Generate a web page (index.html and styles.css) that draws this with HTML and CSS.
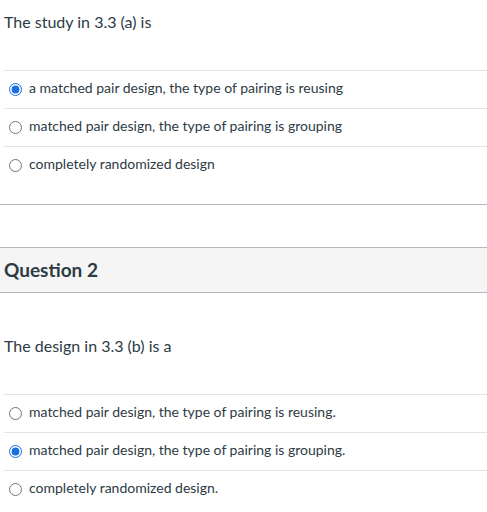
FILE: index.html
```html
<!DOCTYPE html>
<html lang="en">
<head>
    <meta charset="UTF-8">
    <title>Quiz</title>
    <link rel="stylesheet" href="styles.css">
</head>
<body>
    <div class="question">
        <div class="question-text">The study in 3.3 (a) is</div>
        <div class="answers">
            <label class="answer">
                <input type="radio" name="q1" checked>
                <span>a matched pair design, the type of pairing is reusing</span>
            </label>
            <label class="answer">
                <input type="radio" name="q1">
                <span>matched pair design, the type of pairing is grouping</span>
            </label>
            <label class="answer">
                <input type="radio" name="q1">
                <span>completely randomized design</span>
            </label>
        </div>
    </div>

    <div class="question">
        <div class="question-header">Question 2</div>
        <div class="question-text spaced">The design in 3.3 (b) is a</div>
        <div class="answers">
            <label class="answer">
                <input type="radio" name="q2">
                <span>matched pair design, the type of pairing is reusing.</span>
            </label>
            <label class="answer">
                <input type="radio" name="q2" checked>
                <span>matched pair design, the type of pairing is grouping.</span>
            </label>
            <label class="answer">
                <input type="radio" name="q2">
                <span>completely randomized design.</span>
            </label>
        </div>
    </div>
</body>
</html>
```

FILE: styles.css
```css
body {
    font-family: Lato, "Open Sans", sans-serif;
    color: #2d3b45;
    margin: 0;
    padding: 0;
    background-color: white;
}

.question {
    border-bottom: 1px solid #b4b9bd;
    padding-bottom: 20px;
}

.question + .question {
    border-top: 1px solid #b4b9bd;
    border-bottom: none;
    margin-top: 42px;
}

.question-header {
    background-color: #f5f5f5;
    border-bottom: 1px solid #b4b9bd;
    font-size: 19px;
    font-weight: bold;
    padding: 0 4px;
    height: 44px;
    line-height: 44px;
}

.question-text {
    font-size: 16px;
    line-height: 22px;
    padding: 11px 4px 0;
    margin-bottom: 37px;
}

.question-text.spaced {
    padding-top: 42px;
}

.answers {
    margin-left: 4px;
}

.answer {
    display: flex;
    align-items: center;
    box-sizing: border-box;
    height: 38px;
    padding-bottom: 4px;
    border-top: 1px solid #e2e4e6;
    font-size: 14px;
}

.answer input {
    margin: 3px 7px 0 5px;
    width: 13px;
    height: 13px;
    accent-color: #1a6fe0;
}
```
